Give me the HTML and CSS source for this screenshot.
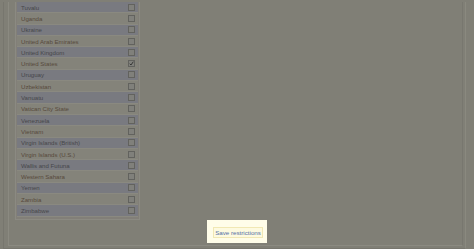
FILE: index.html
```html
<!DOCTYPE html>
<html>
<head>
<meta charset="utf-8">
<link rel="stylesheet" href="styles.css">
</head>
<body>
<div class="frame">
  <div class="inner">
    <div class="panel">
      <div class="row odd"><span>Tuvalu</span><span class="cb"></span></div>
      <div class="row"><span>Uganda</span><span class="cb"></span></div>
      <div class="row odd"><span>Ukraine</span><span class="cb"></span></div>
      <div class="row"><span>United Arab Emirates</span><span class="cb"></span></div>
      <div class="row odd"><span>United Kingdom</span><span class="cb"></span></div>
      <div class="row"><span>United States</span><span class="cb checked"><svg viewBox="0 0 7 7" width="5" height="5"><path d="M1 3.8 L2.8 5.6 L6 1" fill="none" stroke="#2a2a2a" stroke-width="1.2"/></svg></span></div>
      <div class="row odd"><span>Uruguay</span><span class="cb"></span></div>
      <div class="row"><span>Uzbekistan</span><span class="cb"></span></div>
      <div class="row odd"><span>Vanuatu</span><span class="cb"></span></div>
      <div class="row"><span>Vatican City State</span><span class="cb"></span></div>
      <div class="row odd"><span>Venezuela</span><span class="cb"></span></div>
      <div class="row"><span>Vietnam</span><span class="cb"></span></div>
      <div class="row odd"><span>Virgin Islands (British)</span><span class="cb"></span></div>
      <div class="row"><span>Virgin Islands (U.S.)</span><span class="cb"></span></div>
      <div class="row odd"><span>Wallis and Futuna</span><span class="cb"></span></div>
      <div class="row"><span>Western Sahara</span><span class="cb"></span></div>
      <div class="row odd"><span>Yemen</span><span class="cb"></span></div>
      <div class="row"><span>Zambia</span><span class="cb"></span></div>
      <div class="row odd"><span>Zimbabwe</span><span class="cb"></span></div>
    </div>
    <div class="actions">
      <div class="spot"><button class="btn">Save restrictions</button></div>
    </div>
  </div>
</div>
</body>
</html>
```
FILE: styles.css
```css
html, body {
  margin: 0;
  padding: 0;
}
body {
  background: #807f76;
  width: 474px;
  height: 249px;
  overflow: hidden;
  font-family: "Liberation Sans", Arial, sans-serif;
}
.frame {
  box-sizing: border-box;
  margin-left: 3px;
  width: 463px;
  height: 247px;
  border-left: 1px solid #77766e;
  border-right: 1px solid #8a897f;
  border-bottom: 1px solid #77766e;
}
.inner {
  box-sizing: border-box;
  margin-left: 4px;
  margin-right: 2px;
  height: 244px;
  border-left: 1px solid #8b8a81;
  border-right: 1px solid #78776f;
  border-bottom: 1px solid #8b8a81;
}
.panel {
  box-sizing: border-box;
  margin-left: 6px;
  width: 125px;
  margin-top: 2px;
  padding: 0 1px 2px 1px;
  border: 1px solid #8b8a82;
  border-top: none;
  background: #827f78;
}
.row {
  box-sizing: border-box;
  height: 11.3px;
  display: flex;
  align-items: center;
  justify-content: space-between;
  padding: 0 3px 0 4px;
  font-size: 6.1px;
  color: #57493a;
  background: #84837a;
  border-bottom: 1px solid #8a8980;
}
.row.odd {
  background: #797a80;
  color: #46464a;
}
.cb {
  box-sizing: border-box;
  width: 7px;
  height: 7px;
  border: 1px solid #62625e;
  background: #80807b;
  display: flex;
  align-items: center;
  justify-content: center;
}
.actions {
  display: flex;
  justify-content: center;
  margin-left: 3px;
}
.spot {
  background: #fffde9;
  padding: 7px 4px 5px 6px;
}
.btn {
  box-sizing: border-box;
  height: 11px;
  width: 50px;
  padding: 0;
  font-family: "Liberation Sans", Arial, sans-serif;
  font-size: 6.2px;
  color: #5470a6;
  background: #fdfae0;
  border: 1px solid #f1e8b4;
  display: flex;
  align-items: center;
  justify-content: center;
}
```
